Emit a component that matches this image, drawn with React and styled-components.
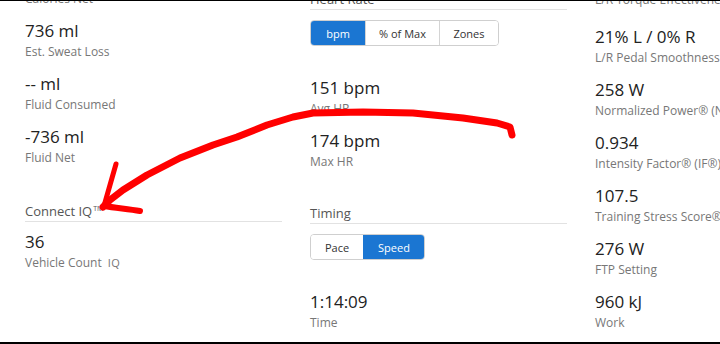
import React from "react";
import styled, { createGlobalStyle } from "styled-components";

const GlobalStyle = createGlobalStyle`
    html, body {
        margin: 0;
        padding: 0;
        background: #fff;
    }
    body {
        font-family: "Open Sans", "Liberation Sans", Arial, sans-serif;
        -webkit-font-smoothing: antialiased;
    }
`;

const Frame = styled.div`
    position: relative;
    width: 720px;
    height: 344px;
    box-sizing: border-box;
    border-top: 1px solid #000;
    border-bottom: 2px solid #000;
    overflow: hidden;
    background: #fff;
`;

const Columns = styled.div`
    display: grid;
    grid-template-columns: 257px 257px 1fr;
    column-gap: 28px;
    padding-left: 25px;
    align-items: start;
`;

const Column = styled.div`
    display: flex;
    flex-direction: column;
    margin-top: ${(p) => p.$offset}px;
    min-width: 0;
    white-space: nowrap;
`;

const StatList = styled.div`
    display: flex;
    flex-direction: column;
    gap: 13px;
    margin-top: ${(p) => p.$top || 0}px;
`;

const Stat = styled.div`
    display: flex;
    flex-direction: column;
    margin-bottom: ${(p) => p.$extra || 0}px;
`;

const Value = styled.div`
    font-size: 17px;
    line-height: 22px;
    color: #222;
`;

const Label = styled.div`
    margin-top: 2px;
    font-size: 12px;
    line-height: 16px;
    color: #777;
`;

const IqMark = styled.span`
    margin-left: 6px;
    font-size: 11px;
    letter-spacing: 0.5px;
    color: #777;
`;

const SectionHeader = styled.div`
    margin-top: ${(p) => p.$top || 0}px;
    padding-bottom: 1px;
    font-size: 13px;
    line-height: 18px;
    color: #555;
    border-bottom: 1px solid #e2e2e2;

    sup {
        font-size: 7px;
        vertical-align: 5px;
        margin-left: 1px;
    }
`;

const ToggleGroup = styled.div`
    display: flex;
    align-self: flex-start;
    margin-top: 10px;
    height: 26px;
    box-sizing: border-box;
    border: 1px solid #cfcfcf;
    border-radius: 4px;
    overflow: hidden;
`;

const ToggleButton = styled.div`
    display: flex;
    align-items: center;
    justify-content: center;
    width: ${(p) => p.$w}px;
    box-sizing: border-box;
    font-size: 11px;
    color: ${(p) => (p.$active ? "#fff" : "#333")};
    background: ${(p) => (p.$active ? "#1b76d2" : "#fff")};
    border-left: 1px solid ${(p) => (p.$active ? "#1b76d2" : "#d4d4d4")};

    &:first-child {
        border-left: none;
    }
`;

const Scribble = styled.svg`
    position: absolute;
    left: 0;
    top: -1px;
    width: 720px;
    height: 344px;
    pointer-events: none;
`;

const leftStats = [
    { value: "0 kcal", label: "Calories Net" },
    { value: "736 ml", label: "Est. Sweat Loss" },
    { value: "-- ml", label: "Fluid Consumed" },
    { value: "-736 ml", label: "Fluid Net" },
];

const hrStats = [
    { value: "151 bpm", label: "Avg HR" },
    { value: "174 bpm", label: "Max HR" },
];

const powerStats = [
    { value: "0% L / 0% R", label: "L/R Torque Effectiveness", extra: 5 },
    { value: "21% L / 0% R", label: "L/R Pedal Smoothness" },
    { value: "258 W", label: "Normalized Power® (NP®)" },
    { value: "0.934", label: "Intensity Factor® (IF®)" },
    { value: "107.5", label: "Training Stress Score®" },
    { value: "276 W", label: "FTP Setting" },
    { value: "960 kJ", label: "Work" },
];

const arrowPts = [
    [512, 135], [510, 127], [497, 123], [463, 118], [413, 113], [363, 112],
    [313, 113], [293, 117], [267, 125], [237, 137], [213, 145], [180, 158],
    [147, 175], [123, 190], [110, 200], [103, 207],
];

function StatItems({ items }) {
    return items.map((s) => (
        <Stat key={s.label} $extra={s.extra}>
            <Value>{s.value}</Value>
            <Label>{s.label}</Label>
        </Stat>
    ));
}

export default function App() {
    return (
        <>
            <GlobalStyle />
            <Frame>
                <Columns>
                    <Column $offset={-34}>
                        <StatList>
                            <StatItems items={leftStats} />
                        </StatList>
                        <SectionHeader $top={34}>
                            Connect IQ<sup>TM</sup>
                        </SectionHeader>
                        <Stat style={{ marginTop: 9 }}>
                            <Value>36</Value>
                            <Label>
                                Vehicle Count<IqMark>IQ</IqMark>
                            </Label>
                        </Stat>
                    </Column>

                    <Column $offset={-11}>
                        <SectionHeader>Heart Rate</SectionHeader>
                        <ToggleGroup>
                            <ToggleButton $w={54} $active>bpm</ToggleButton>
                            <ToggleButton $w={74}>% of Max</ToggleButton>
                            <ToggleButton $w={59}>Zones</ToggleButton>
                        </ToggleGroup>
                        <StatList $top={31}>
                            <StatItems items={hrStats} />
                        </StatList>
                        <SectionHeader $top={34}>Timing</SectionHeader>
                        <ToggleGroup>
                            <ToggleButton $w={52}>Pace</ToggleButton>
                            <ToggleButton $w={61} $active>Speed</ToggleButton>
                        </ToggleGroup>
                        <StatList $top={31}>
                            <StatItems items={[{ value: "1:14:09", label: "Time" }]} />
                        </StatList>
                    </Column>

                    <Column $offset={-33}>
                        <StatList>
                            <StatItems items={powerStats} />
                        </StatList>
                    </Column>
                </Columns>

                <Scribble viewBox="0 0 720 344">
                    <polyline
                        points={arrowPts.map((p) => p.join(",")).join(" ")}
                        fill="none"
                        stroke="#f00"
                        strokeWidth="7"
                        strokeLinecap="round"
                        strokeLinejoin="round"
                    />
                    <path
                        d="M116 164 C112 178 108 192 104 206"
                        fill="none"
                        stroke="#f00"
                        strokeWidth="5"
                        strokeLinecap="round"
                    />
                    <path
                        d="M104 206 C116 208 128 209 140 211"
                        fill="none"
                        stroke="#f00"
                        strokeWidth="6"
                        strokeLinecap="round"
                    />
                </Scribble>
            </Frame>
        </>
    );
}
